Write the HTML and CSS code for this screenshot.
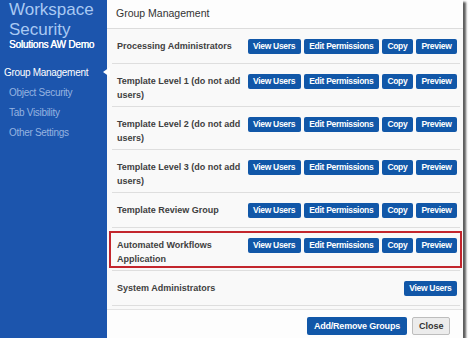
FILE: index.html
```html
<!DOCTYPE html>
<html>
<head>
<meta charset="utf-8">
<link rel="stylesheet" href="styles.css">
</head>
<body>
<div class="frame">
  <aside class="sidebar">
    <div class="app-title">Workspace Security</div>
    <div class="app-sub">Solutions AW Demo</div>
    <nav class="nav">
      <div class="nav-item active">Group Management</div>
      <div class="nav-item">Object Security</div>
      <div class="nav-item">Tab Visibility</div>
      <div class="nav-item">Other Settings</div>
    </nav>
  </aside>
  <main class="panel">
    <div class="panel-head">Group Management</div>
    <div class="list">
      <div class="row">
        <div class="label">Processing Administrators</div>
        <div class="actions"><span class="btn">View Users</span><span class="btn">Edit Permissions</span><span class="btn">Copy</span><span class="btn">Preview</span></div>
      </div>
      <div class="row">
        <div class="label">Template Level 1 (do not add users)</div>
        <div class="actions"><span class="btn">View Users</span><span class="btn">Edit Permissions</span><span class="btn">Copy</span><span class="btn">Preview</span></div>
      </div>
      <div class="row">
        <div class="label">Template Level 2 (do not add users)</div>
        <div class="actions"><span class="btn">View Users</span><span class="btn">Edit Permissions</span><span class="btn">Copy</span><span class="btn">Preview</span></div>
      </div>
      <div class="row">
        <div class="label">Template Level 3 (do not add users)</div>
        <div class="actions"><span class="btn">View Users</span><span class="btn">Edit Permissions</span><span class="btn">Copy</span><span class="btn">Preview</span></div>
      </div>
      <div class="row">
        <div class="label">Template Review Group</div>
        <div class="actions"><span class="btn">View Users</span><span class="btn">Edit Permissions</span><span class="btn">Copy</span><span class="btn">Preview</span></div>
      </div>
      <div class="row highlight">
        <div class="label">Automated Workflows Application</div>
        <div class="actions"><span class="btn">View Users</span><span class="btn">Edit Permissions</span><span class="btn">Copy</span><span class="btn">Preview</span></div>
      </div>
      <div class="row">
        <div class="label">System Administrators</div>
        <div class="actions"><span class="btn">View Users</span></div>
      </div>
    </div>
    <div class="footer">
      <span class="fbtn primary">Add/Remove Groups</span>
      <span class="fbtn secondary">Close</span>
    </div>
  </main>
</div>
</body>
</html>
```
FILE: styles.css
```css
* { box-sizing: border-box; }
html, body { margin: 0; padding: 0; background: #ffffff; }
body { font-family: "Liberation Sans", Arial, sans-serif; }

.frame {
  display: flex;
  width: 463px;
  height: 338px;
  box-shadow: 3px 2px 2px rgba(40, 40, 40, 0.75);
}

.sidebar {
  width: 107px;
  flex: none;
  background: #1c55ad;
  padding-left: 9px;
}
.app-title {
  font-size: 17px;
  line-height: 20px;
  color: #a9c9f3;
  width: 90px;
}
.app-sub {
  font-size: 10px;
  line-height: 11px;
  color: #ffffff;
  margin-top: -1px;
  letter-spacing: -0.2px;
  white-space: nowrap;
  text-shadow: 0.3px 0 0 #ffffff;
}
.nav { margin-top: 13px; }
.nav-item {
  position: relative;
  font-size: 10px;
  line-height: 20px;
  letter-spacing: -0.3px;
  color: #95b3e0;
}
.nav-item.active {
  color: #ffffff;
  margin-left: -5px;
}
.nav-item.active::after {
  content: "";
  position: absolute;
  right: -3px;
  top: 4px;
  border-right: 7px solid #ffffff;
  border-top: 5.5px solid transparent;
  border-bottom: 5.5px solid transparent;
}

.panel {
  flex: 1;
  display: flex;
  flex-direction: column;
  background: #f9f9f9;
}
.panel-head {
  height: 29px;
  line-height: 27px;
  padding-left: 9px;
  font-size: 10.5px;
  color: #333333;
  background: #fdfdfd;
  border-bottom: 1px solid #dcdcdc;
}
.list {
  margin: 0 3px 0 5px;
}
.row {
  position: relative;
  display: flex;
  align-items: flex-start;
  gap: 6px;
  min-height: 35px;
  padding: 10px 3px 4px 5px;
  border-bottom: 1px solid #dedede;
}
.label {
  flex: 1;
  font-size: 9px;
  line-height: 14px;
  font-weight: bold;
  color: #404040;
}
.actions {
  display: flex;
  gap: 3px;
  justify-content: flex-end;
}
.btn {
  display: block;
  height: 15px;
  line-height: 15px;
  padding: 0 5.5px;
  font-size: 8.5px;
  font-weight: bold;
  letter-spacing: -0.3px;
  color: #ffffff;
  background: #1157a8;
  border-radius: 2px;
  white-space: nowrap;
}
.highlight::after {
  content: "";
  position: absolute;
  top: 3px;
  bottom: 2px;
  left: -3px;
  right: -2px;
  border: 2px solid #c3262d;
}

.footer {
  margin-top: 3px;
  border-top: 1px solid #e3e3e3;
  background: #fdfdfd;
  flex: 1;
  display: flex;
  justify-content: flex-end;
  align-items: flex-start;
  gap: 5px;
  padding: 7px 13px 0 0;
}
.fbtn {
  display: block;
  height: 18px;
  line-height: 18px;
  font-size: 9px;
  font-weight: bold;
  border-radius: 2px;
  white-space: nowrap;
}
.fbtn.primary {
  background: #1157a8;
  color: #ffffff;
  padding: 0 7px;
  letter-spacing: -0.2px;
}
.fbtn.secondary {
  background: #ececec;
  color: #333333;
  border: 1px solid #bdbdbd;
  line-height: 16px;
  padding: 0 6px;
  width: 38px;
  text-align: center;
}
```
